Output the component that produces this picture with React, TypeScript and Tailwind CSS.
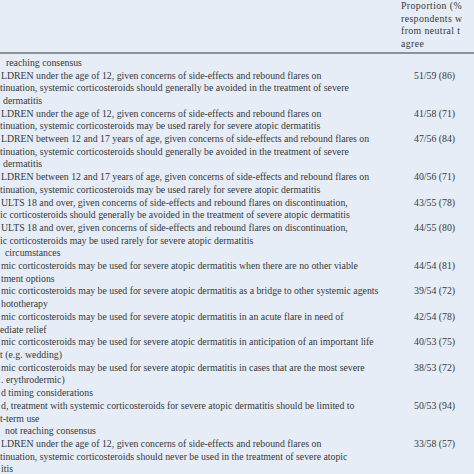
import React from 'react';

type Row = {
  lines: { text: string; indent?: string }[];
  value?: string;
  heading?: boolean;
};

const rows: Row[] = [
  { heading: true, lines: [{ text: 'reaching consensus', indent: 'pl-[6px]' }] },
  {
    value: '51/59 (86)',
    lines: [
      { text: 'LDREN under the age of 12, given concerns of side-effects and rebound flares on', indent: 'pl-[1px]' },
      { text: 'tinuation, systemic corticosteroids should generally be avoided in the treatment of severe' },
      { text: 'dermatitis', indent: 'pl-[3px]' },
    ],
  },
  {
    value: '41/58 (71)',
    lines: [
      { text: 'LDREN under the age of 12, given concerns of side-effects and rebound flares on', indent: 'pl-[1px]' },
      { text: 'tinuation, systemic corticosteroids may be used rarely for severe atopic dermatitis' },
    ],
  },
  {
    value: '47/56 (84)',
    lines: [
      { text: 'LDREN between 12 and 17 years of age, given concerns of side-effects and rebound flares on', indent: 'pl-[1px]' },
      { text: 'tinuation, systemic corticosteroids should generally be avoided in the treatment of severe' },
      { text: 'dermatitis', indent: 'pl-[3px]' },
    ],
  },
  {
    value: '40/56 (71)',
    lines: [
      { text: 'LDREN between 12 and 17 years of age, given concerns of side-effects and rebound flares on', indent: 'pl-[1px]' },
      { text: 'tinuation, systemic corticosteroids may be used rarely for severe atopic dermatitis' },
    ],
  },
  {
    value: '43/55 (78)',
    lines: [
      { text: 'ULTS 18 and over, given concerns of side-effects and rebound flares on discontinuation,', indent: 'pl-[1px]' },
      { text: 'ic corticosteroids should generally be avoided in the treatment of severe atopic dermatitis' },
    ],
  },
  {
    value: '44/55 (80)',
    lines: [
      { text: 'ULTS 18 and over, given concerns of side-effects and rebound flares on discontinuation,', indent: 'pl-[1px]' },
      { text: 'ic corticosteroids may be used rarely for severe atopic dermatitis' },
    ],
  },
  { heading: true, lines: [{ text: 'circumstances', indent: 'pl-[5px]' }] },
  {
    value: '44/54 (81)',
    lines: [
      { text: 'mic corticosteroids may be used for severe atopic dermatitis when there are no other viable', indent: 'pl-[1px]' },
      { text: 'tment options', indent: 'pl-[1px]' },
    ],
  },
  {
    value: '39/54 (72)',
    lines: [
      { text: 'mic corticosteroids may be used for severe atopic dermatitis as a bridge to other systemic agents', indent: 'pl-[1px]' },
      { text: 'hototherapy', indent: 'pl-[1px]' },
    ],
  },
  {
    value: '42/54 (78)',
    lines: [
      { text: 'mic corticosteroids may be used for severe atopic dermatitis in an acute flare in need of', indent: 'pl-[1px]' },
      { text: 'ediate relief' },
    ],
  },
  {
    value: '40/53 (75)',
    lines: [
      { text: 'mic corticosteroids may be used for severe atopic dermatitis in anticipation of an important life', indent: 'pl-[1px]' },
      { text: 't (e.g. wedding)' },
    ],
  },
  {
    value: '38/53 (72)',
    lines: [
      { text: 'mic corticosteroids may be used for severe atopic dermatitis in cases that are the most severe', indent: 'pl-[1px]' },
      { text: '. erythrodermic)', indent: 'pl-[1px]' },
    ],
  },
  { heading: true, lines: [{ text: 'd timing considerations', indent: 'pl-[1px]' }] },
  {
    value: '50/53 (94)',
    lines: [
      { text: 'd, treatment with systemic corticosteroids for severe atopic dermatitis should be limited to', indent: 'pl-[1px]' },
      { text: 't-term use' },
    ],
  },
  { heading: true, lines: [{ text: 'not reaching consensus', indent: 'pl-[5px]' }] },
  {
    value: '33/58 (57)',
    lines: [
      { text: 'LDREN under the age of 12, given concerns of side-effects and rebound flares on', indent: 'pl-[1px]' },
      { text: 'tinuation, systemic corticosteroids should never be used in the treatment of severe atopic' },
      { text: 'itis', indent: 'pl-[1px]' },
    ],
  },
];

export default function App() {
  return (
    <div
      className="w-[474px] h-[474px] overflow-hidden bg-[#e6edf6] text-[#38393b] text-[9.8px] leading-[12.7px]"
      style={{ fontFamily: '"Liberation Serif", "Times New Roman", serif' }}
    >
      {/* header */}
      <div className="flex pb-[1px]">
        <div className="w-[401px] shrink-0" />
        <div className="whitespace-nowrap tracking-[0.4px]">
          <div>Proportion (%</div>
          <div>respondents w</div>
          <div>from neutral t</div>
          <div>agree</div>
        </div>
      </div>
      <div className="h-[2px] bg-[#8d9198]" />

      <div className="pt-[3px]">
        {rows.map((row, i) => (
          <div key={i} className="flex">
            <div className="w-[414px] shrink-0 overflow-hidden">
              {row.lines.map((l, j) => (
                <div key={j} className={`whitespace-nowrap ${l.indent ?? ''}`}>
                  {l.text}
                </div>
              ))}
            </div>
            <div className="whitespace-nowrap">{row.value}</div>
          </div>
        ))}
      </div>
    </div>
  );
}
